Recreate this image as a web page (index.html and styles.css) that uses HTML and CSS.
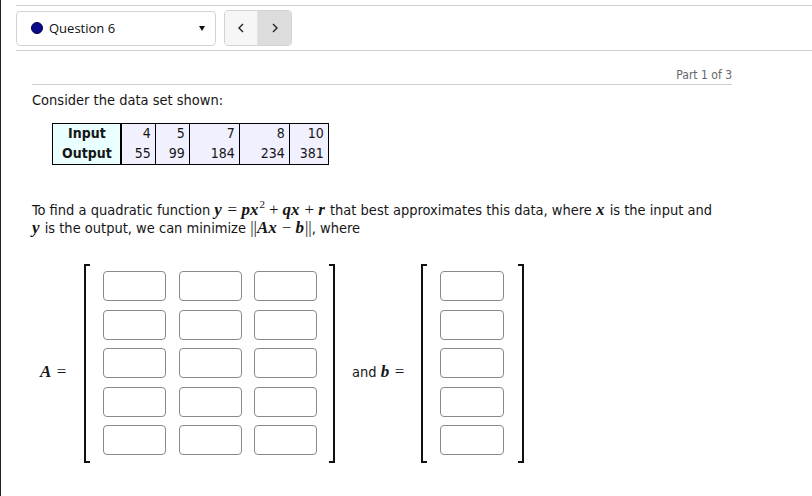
FILE: index.html
```html
<!DOCTYPE html>
<html lang="en">
<head>
  <meta charset="UTF-8">
  <title>Question 6</title>
  <link rel="stylesheet" href="styles.css">
</head>
<body>
  <div class="page">
    <div class="topbar">
      <div class="picker">
        <span class="dot"></span>
        <span class="picker-label">Question 6</span>
        <span class="caret"></span>
      </div>
      <div class="nav">
        <button class="nav-btn prev">
          <svg width="6" height="10" viewBox="0 0 6 10"><path d="M5 1 L1 5 L5 9" fill="none" stroke="#222" stroke-width="1.4"/></svg>
        </button>
        <button class="nav-btn next">
          <svg width="6" height="10" viewBox="0 0 6 10"><path d="M1 1 L5 5 L1 9" fill="none" stroke="#222" stroke-width="1.4"/></svg>
        </button>
      </div>
    </div>

    <div class="question">
      <div class="part">Part 1 of 3</div>

      <p class="lead">Consider the data set shown:</p>

      <table class="data">
        <tr>
          <th>Input</th>
          <td class="w1">4</td><td class="w1">5</td><td class="w2">7</td><td class="w2">8</td><td class="w3">10</td>
        </tr>
        <tr>
          <th>Output</th>
          <td>55</td><td>99</td><td>184</td><td>234</td><td>381</td>
        </tr>
      </table>

      <p class="prompt">
        To find a quadratic function <span class="m"><i>y</i><span class="rel">=</span><i>px</i><sup>2</sup><span class="bin">+</span><i>qx</i><span class="bin">+</span><i>r</i></span> that best approximates this data, where <span class="m"><i>x</i></span> is the input and<br>
        <span class="m"><i>y</i></span> is the output, we can minimize <span class="m">||<i>Ax</i><span class="bin">&minus;</span><i>b</i>||</span>, where
      </p>

      <div class="equation">
        <span class="m eq-label"><i>A</i><span class="rel">=</span></span>
        <div class="matrix">
          <span class="brk brk-l"></span>
          <div class="cells cols-3">
            <input type="text"><input type="text"><input type="text">
            <input type="text"><input type="text"><input type="text">
            <input type="text"><input type="text"><input type="text">
            <input type="text"><input type="text"><input type="text">
            <input type="text"><input type="text"><input type="text">
          </div>
          <span class="brk brk-r"></span>
        </div>
        <span class="and-label">and <span class="m"><i>b</i><span class="rel">=</span></span></span>
        <div class="matrix">
          <span class="brk brk-l"></span>
          <div class="cells cols-1">
            <input type="text">
            <input type="text">
            <input type="text">
            <input type="text">
            <input type="text">
          </div>
          <span class="brk brk-r"></span>
        </div>
      </div>
    </div>
  </div>
</body>
</html>
```

FILE: styles.css
```css
html, body {
  margin: 0;
  padding: 0;
  background: #fff;
}

body {
  font-family: 'DejaVu Sans Condensed', 'DejaVu Sans', sans-serif;
  font-size: 14.5px;
  color: #161616;
  border-left: 1px solid #222;
  min-height: 496px;
  box-sizing: border-box;
}

.page {
  padding-top: 5px;
}

/* question picker bar */
.topbar {
  margin-left: 15px;
  border-top: 1px solid #d0d0d0;
  border-bottom: 1px solid #d0d0d0;
  padding: 4px 0 4px;
  display: flex;
  align-items: center;
  gap: 8px;
}

.picker {
  width: 200px;
  height: 35px;
  box-sizing: border-box;
  border: 1px solid #d3d3d3;
  border-radius: 4px;
  display: flex;
  align-items: center;
  padding: 0 10px 0 14px;
  font-family: 'Open Sans', sans-serif;
  font-size: 13px;
  color: #111;
}

.dot {
  width: 12px;
  height: 12px;
  border-radius: 50%;
  background: #0a0a8a;
  border: 1px solid #000046;
  box-sizing: border-box;
  margin-right: 6px;
}

.picker-label {
  flex: 1;
}

.caret {
  width: 0;
  height: 0;
  border-left: 3.5px solid transparent;
  border-right: 3.5px solid transparent;
  border-top: 5px solid #111;
}

.nav {
  display: flex;
  height: 34px;
  border: 1px solid #d3d3d3;
  border-radius: 4px;
  overflow: hidden;
}

.nav-btn {
  width: 33px;
  border: none;
  margin: 0;
  padding: 0;
  display: flex;
  align-items: center;
  justify-content: center;
}

.nav-btn.prev {
  background: #f6f6f6;
  border-right: 1px solid #e2e2e2;
}

.nav-btn.next {
  background: #dcdcdc;
}

/* question body */
.question {
  margin: 0 80px 0 31px;
  width: 700px;
}

.part {
  text-align: right;
  color: #666;
  font-size: 12px;
  padding-top: 17px;
  padding-bottom: 2px;
  border-bottom: 1px solid #cfcfcf;
}

.lead {
  margin: 7px 0 0;
  line-height: 17px;
}

.data {
  border-collapse: collapse;
  margin: 14px 0 0 20px;
  border: 1px solid #000;
  line-height: 19px;
  font-size: 14px;
}

.data th {
  background: #eaffff;
  font-weight: bold;
  padding: 0 8px 1px 9px;
  border-right: 2px solid #000;
  text-align: center;
}

.data td {
  background: #f0f0ff;
  text-align: right;
  padding: 0 4px 1px;
  border-left: 1px solid #000;
}

.data .w1 { width: 25px; }
.data .w2 { width: 41px; }
.data .w3 { width: 30px; }

.prompt {
  margin: 36px 0 0;
  line-height: 18px;
}

.m {
  font-family: 'Liberation Serif', 'DejaVu Serif', serif;
  font-size: 17px;
}

.m i {
  font-weight: bold;
  padding-right: 1px;
}

.m sup {
  font-size: 11px;
  line-height: 0;
}

.rel {
  margin: 0 4.5px;
}

.bin {
  margin: 0 4px;
}

/* matrices */
.equation {
  display: flex;
  align-items: center;
  margin-top: 27px;
  padding-left: 8px;
}

.eq-label {
  width: 44px;
  padding-top: 16px;
}

.and-label {
  padding-top: 16px;
  margin: 0 12px 0 17px;
}

.matrix {
  display: flex;
  align-items: stretch;
}

.brk {
  width: 4px;
  border: 2px solid #111;
}

.brk-l { border-right: none; }
.brk-r { border-left: none; }

.cells {
  display: grid;
  grid-auto-rows: 30px;
  row-gap: 8.5px;
  column-gap: 12.5px;
  padding: 7px 12px 8px 13px;
}

.cols-3 { grid-template-columns: repeat(3, 63px); }
.cols-1 { grid-template-columns: 64px; padding-right: 14px; }

.cells input {
  box-sizing: border-box;
  width: 100%;
  height: 30px;
  margin: 0;
  border: 1px solid #8a8a8a;
  border-radius: 4px;
  background: #fff;
}
```
